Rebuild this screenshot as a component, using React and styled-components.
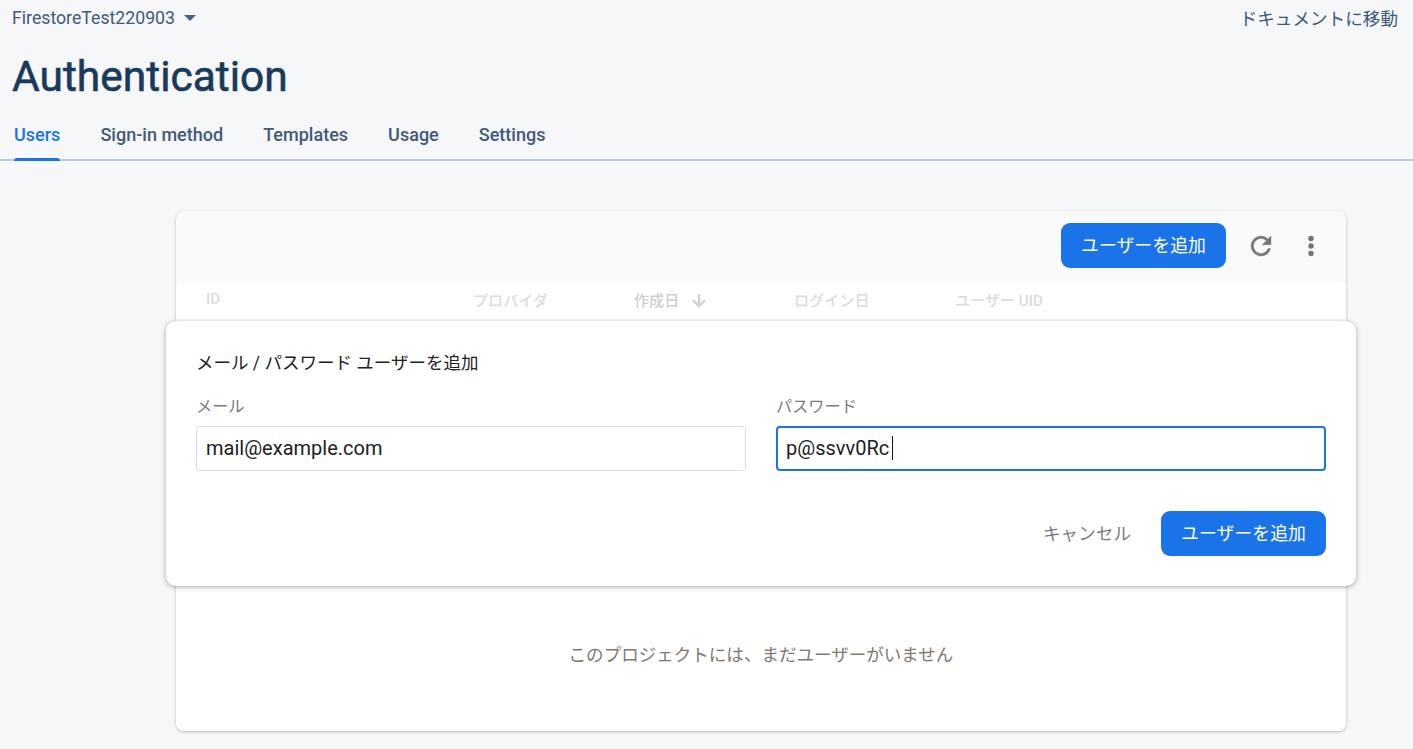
import styled, { createGlobalStyle } from 'styled-components';

const GlobalStyle = createGlobalStyle`
  html, body {
    margin: 0;
    height: 100%;
    overflow: hidden;
    background: #f6f7f9;
    font-family: Roboto, "Noto Sans CJK JP", sans-serif;
  }
`;

const Page = styled.div`
  height: 749px;
  display: flex;
  flex-direction: column;
`;

const TopBar = styled.div`
  height: 36px;
  padding: 0 15px 0 12px;
  display: flex;
  align-items: center;
  justify-content: space-between;
  color: #3f5a7a;
  font-size: 17.6px;
`;

const Project = styled.div`
  display: flex;
  align-items: center;
  gap: 9px;
  font-size: 17.7px;
`;

const DocsLink = styled.span`
  padding-bottom: 2px;
`;

const Caret = styled.span`
  width: 0;
  height: 0;
  border-left: 6.5px solid transparent;
  border-right: 6.5px solid transparent;
  border-top: 6.5px solid #4a6385;
`;

const Title = styled.h1`
  margin: 16px 0 0 12px;
  height: 50px;
  font-family: Roboto, sans-serif;
  font-size: 42.5px;
  line-height: 50px;
  font-weight: 400;
  color: #1a3a5c;
  -webkit-text-stroke: 0.6px #1a3a5c;
`;

const Tabs = styled.div`
  margin-top: 14px;
  height: 43px;
  padding-left: 14px;
  display: flex;
  gap: 40px;
  border-bottom: 2px solid #bccbdf;
`;

const Tab = styled.div`
  position: relative;
  height: 43px;
  line-height: 38px;
  font-size: 18.05px;
  font-weight: 500;
  color: ${({ $active }) => ($active ? '#1a73e8' : '#43597a')};

  &:after {
    content: '';
    display: ${({ $active }) => ($active ? 'block' : 'none')};
    position: absolute;
    left: 0;
    right: 0;
    bottom: -2px;
    height: 3px;
    border-radius: 3px 3px 0 0;
    background: #1a73e8;
  }
`;

const Stage = styled.div`
  position: relative;
  flex: 1;
  padding: 50px 67px 0 176px;
`;

const Card = styled.div`
  height: 520px;
  border-radius: 8px;
  background: #fafafa;
  box-shadow: 0 1px 3px rgba(60, 64, 67, 0.35);
  display: flex;
  flex-direction: column;
`;

const Toolbar = styled.div`
  box-sizing: border-box;
  height: 70px;
  padding: 0 20px 1px 0;
  display: flex;
  align-items: center;
  justify-content: flex-end;
`;

const PrimaryButton = styled.button`
  width: 165px;
  height: 45px;
  border: none;
  border-radius: 9px;
  background: #1a73e8;
  color: #fff;
  font: 400 17.9px Roboto, "Noto Sans CJK JP", sans-serif;
  padding: 0 0 4px;
`;

const IconButton = styled.span`
  display: flex;
  margin-left: ${({ $gap }) => $gap}px;
`;

const CardBody = styled.div`
  flex: 1;
  background: #fff;
  border-radius: 8px;
  display: flex;
  flex-direction: column;
`;

const TableHead = styled.div`
  box-sizing: border-box;
  height: 40px;
  padding: 0 0 4px 30px;
  display: flex;
  align-items: center;
  font-size: 15.1px;
  font-weight: 500;
`;

const HeadCell = styled.div`
  width: ${({ $w }) => $w}px;
  display: flex;
  align-items: center;
  gap: 11px;
  color: ${({ $strong }) => ($strong ? '#cfcfcf' : '#dcdcdc')};
`;

const SortArrow = styled.svg`
  margin-top: 4px;
`;

const Empty = styled.div`
  margin-top: auto;
  height: 88px;
  text-align: center;
  color: #80786f;
  font-size: 17.55px;
  line-height: 24px;
`;

const Dialog = styled.div`
  position: absolute;
  left: 166px;
  top: 160px;
  box-sizing: border-box;
  width: 1190px;
  height: 265px;
  padding: 30px 30px 0;
  border-radius: 10px;
  background: #fff;
  box-shadow: 0 1px 5px rgba(60, 64, 67, 0.45);
`;

const DialogTitle = styled.div`
  height: 24px;
  line-height: 24px;
  font-size: 17.5px;
  color: #202124;
`;

const Fields = styled.div`
  margin-top: 21px;
  display: grid;
  grid-template-columns: 550px 550px;
  gap: 30px;
`;

const Label = styled.div`
  height: 22px;
  line-height: 22px;
  font-size: 16.2px;
  color: #7b7b7b;
`;

const Field = styled.div`
  margin-top: 8px;
  box-sizing: border-box;
  height: 45px;
  padding: 0 ${({ $focus }) => ($focus ? 8 : 9)}px 1px;
  display: flex;
  align-items: center;
  border-radius: 4px;
  border: ${({ $focus }) => ($focus ? '2px solid #1a73e8' : '1px solid #dedede')};
  font-size: 20px;
  color: #202124;
`;

const TextCaret = styled.span`
  width: 1px;
  height: 24px;
  margin-left: 3px;
  background: #111;
`;

const Actions = styled.div`
  margin-top: 40px;
  display: flex;
  align-items: center;
  justify-content: flex-end;
  gap: 30px;
`;

const CancelButton = styled.span`
  color: #7b7b7b;
  font-size: 17.6px;
  padding-bottom: 2px;
`;

export default function App() {
  return (
    <Page>
      <GlobalStyle />
      <TopBar>
        <Project>
          FirestoreTest220903
          <Caret />
        </Project>
        <DocsLink>ドキュメントに移動</DocsLink>
      </TopBar>
      <Title>Authentication</Title>
      <Tabs>
        <Tab $active>Users</Tab>
        <Tab>Sign-in method</Tab>
        <Tab>Templates</Tab>
        <Tab>Usage</Tab>
        <Tab>Settings</Tab>
      </Tabs>
      <Stage>
        <Card>
          <Toolbar>
            <PrimaryButton>ユーザーを追加</PrimaryButton>
            <IconButton $gap={20}>
              <svg width="30" height="30" viewBox="0 0 24 24" fill="#757575" stroke="#757575" strokeWidth="0.3">
                <path d="M17.65 6.35A7.96 7.96 0 0 0 12 4a8 8 0 1 0 7.73 10h-2.08A6 6 0 1 1 12 6c1.66 0 3.14.69 4.22 1.78L13 11h7V4l-2.35 2.35z" />
              </svg>
            </IconButton>
            <IconButton $gap={20}>
              <svg width="30" height="30" viewBox="0 0 24 24" fill="#757575">
                <circle cx="12" cy="6" r="2.2" />
                <circle cx="12" cy="12" r="2.2" />
                <circle cx="12" cy="18" r="2.2" />
              </svg>
            </IconButton>
          </Toolbar>
          <CardBody>
            <TableHead>
              <HeadCell $w={267}>ID</HeadCell>
              <HeadCell $w={161}>プロバイダ</HeadCell>
              <HeadCell $w={160} $strong>
                作成日
                <SortArrow width="18" height="18" viewBox="0 0 16 16" fill="#cfcfcf">
                  <path d="M7 2h2v8.2l3.6-3.6L14 8l-6 6-6-6 1.4-1.4L7 10.2z" />
                </SortArrow>
              </HeadCell>
              <HeadCell $w={161}>ログイン日</HeadCell>
              <HeadCell $w={200}>ユーザー UID</HeadCell>
            </TableHead>
            <Empty>このプロジェクトには、まだユーザーがいません</Empty>
          </CardBody>
        </Card>
        <Dialog>
          <DialogTitle>メール / パスワード ユーザーを追加</DialogTitle>
          <Fields>
            <div>
              <Label>メール</Label>
              <Field>mail@example.com</Field>
            </div>
            <div>
              <Label>パスワード</Label>
              <Field $focus>
                p@ssvv0Rc
                <TextCaret />
              </Field>
            </div>
          </Fields>
          <Actions>
            <CancelButton>キャンセル</CancelButton>
            <PrimaryButton>ユーザーを追加</PrimaryButton>
          </Actions>
        </Dialog>
      </Stage>
    </Page>
  );
}
